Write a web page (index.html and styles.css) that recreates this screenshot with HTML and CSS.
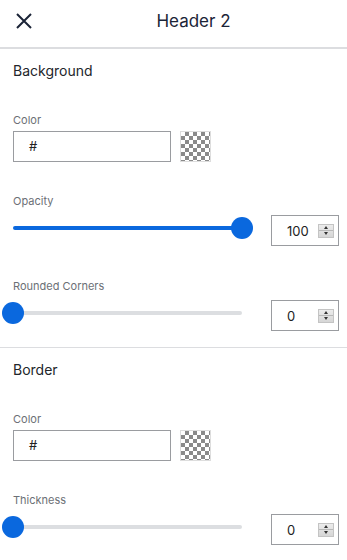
FILE: index.html
```html
<!DOCTYPE html>
<html>
<head>
<meta charset="utf-8">
<link rel="stylesheet" href="styles.css">
</head>
<body>
<div class="panel">
  <header class="header">
    <button class="close" aria-label="Close">
      <svg width="18" height="18" viewBox="0 0 18 18"><path d="M2 2 L16 16 M16 2 L2 16" stroke="#1b2437" stroke-width="2" fill="none"/></svg>
    </button>
    <div class="title">Header 2</div>
  </header>

  <section class="section">
    <h2 class="section-title">Background</h2>
    <div class="field field-first">
      <div class="label">Color</div>
      <div class="color-row">
        <div class="text-input">#</div>
        <div class="swatch"></div>
      </div>
    </div>
    <div class="field field-slider">
      <div class="label">Opacity</div>
      <div class="slider-row">
        <div class="slider">
          <div class="track"><div class="fill" style="width:100%"></div></div>
          <div class="thumb" style="left:100%"></div>
        </div>
        <div class="number">
          <span>100</span>
          <span class="spin"><i class="up"></i><i class="down"></i></span>
        </div>
      </div>
    </div>
    <div class="field field-slider field-gap">
      <div class="label">Rounded Corners</div>
      <div class="slider-row">
        <div class="slider">
          <div class="track"><div class="fill" style="width:0%"></div></div>
          <div class="thumb" style="left:0%"></div>
        </div>
        <div class="number">
          <span>0</span>
          <span class="spin"><i class="up"></i><i class="down"></i></span>
        </div>
      </div>
    </div>
  </section>

  <section class="section section-border">
    <h2 class="section-title">Border</h2>
    <div class="field field-first">
      <div class="label">Color</div>
      <div class="color-row">
        <div class="text-input">#</div>
        <div class="swatch"></div>
      </div>
    </div>
    <div class="field field-slider">
      <div class="label">Thickness</div>
      <div class="slider-row">
        <div class="slider">
          <div class="track"><div class="fill" style="width:0%"></div></div>
          <div class="thumb" style="left:0%"></div>
        </div>
        <div class="number">
          <span>0</span>
          <span class="spin"><i class="up"></i><i class="down"></i></span>
        </div>
      </div>
    </div>
  </section>
</div>
</body>
</html>
```

FILE: styles.css
```css
* { box-sizing: border-box; }
html, body { margin: 0; padding: 0; background: #fff; }
body {
  font-family: "Inter", "Noto Sans", sans-serif;
  color: #1f2329;
  width: 347px;
  height: 560px;
  overflow: hidden;
}
.panel { display: flex; flex-direction: column; }

.header {
  height: 49px;
  border-bottom: 2px solid #dcdde0;
  display: flex;
  align-items: center;
}
.close {
  width: 40px;
  height: 40px;
  margin-left: 4px;
  padding: 0;
  border: 0;
  background: none;
  display: flex;
  align-items: center;
  justify-content: center;
  margin-top: -6px;
}
.title {
  flex: 1;
  text-align: center;
  font-size: 17px;
  line-height: 20px;
  color: #1b2437;
  margin-top: -6px;
  padding-right: 4px;
}

.section {
  padding: 13px 0 16px 13px;
  display: flex;
  flex-direction: column;
}
.section-border {
  border-top: 1px solid #dcdde0;
}
.section-title {
  margin: 0;
  font-size: 14px;
  font-weight: 400;
  line-height: 18px;
  color: #22262b;
}
.field { display: flex; flex-direction: column; }
.label {
  font-size: 11px;
  line-height: 14px;
  color: #6c7076;
  margin-top: 32px;
  margin-bottom: 4px;
}
.field-first .label { margin-top: 33px; }
.field-gap .label { margin-top: 33px; }
.field-slider .label { margin-bottom: 7px; }

.color-row { display: flex; align-items: center; gap: 9px; }
.text-input {
  width: 158px;
  height: 31px;
  border: 1px solid #9a9ca0;
  font-size: 13px;
  line-height: 29px;
  padding-left: 15px;
  color: #222;
}
.swatch {
  width: 31px;
  height: 31px;
  border: 1px solid #dddddd;
  background-color: #fff;
  background-image:
    linear-gradient(45deg, #8a8a8a 25%, transparent 25%, transparent 75%, #8a8a8a 75%),
    linear-gradient(45deg, #8a8a8a 25%, transparent 25%, transparent 75%, #8a8a8a 75%);
  background-size: 8px 8px;
  background-position: 0 0, 4px 4px;
}

.slider-row {
  display: flex;
  align-items: center;
  height: 31px;
}
.slider {
  position: relative;
  width: 229px;
  height: 22px;
  display: flex;
  align-items: center;
  margin-top: -5px;
}
.track {
  width: 100%;
  height: 4px;
  border-radius: 2px;
  background: #dcdee1;
  overflow: hidden;
}
.fill { height: 100%; background: #0a68de; }
.thumb {
  position: absolute;
  top: 0;
  width: 22px;
  height: 22px;
  margin-left: -11px;
  border-radius: 50%;
  background: #0a68de;
}
.number {
  margin-left: 29px;
  width: 68px;
  height: 31px;
  border: 1px solid #9a9ca0;
  display: flex;
  align-items: center;
  justify-content: space-between;
  padding: 0 4px 0 15px;
  font-size: 13px;
  color: #222;
}
.spin {
  width: 16px;
  height: 14px;
  background: linear-gradient(#ececec, #d6d6d6);
  border: 1px solid #c4c4c4;
  display: flex;
  flex-direction: column;
}
.spin i {
  flex: 1;
  display: flex;
  align-items: center;
  justify-content: center;
}
.spin .up { border-bottom: 1px solid #b8b8b8; }
.spin i::before {
  content: "";
  width: 0;
  height: 0;
  border-left: 2px solid transparent;
  border-right: 2px solid transparent;
}
.spin .up::before { border-bottom: 3px solid #333; }
.spin .down::before { border-top: 3px solid #333; }
```
